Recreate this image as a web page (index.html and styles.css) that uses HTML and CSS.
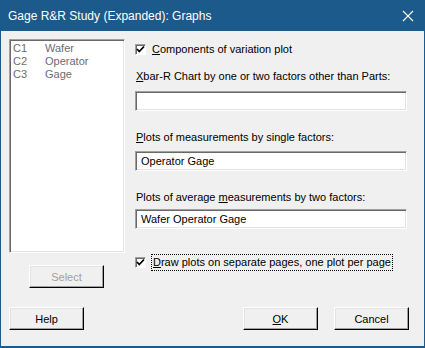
FILE: index.html
```html
<!DOCTYPE html>
<html>
<head>
<meta charset="utf-8">
<link rel="stylesheet" href="styles.css">
</head>
<body>
<div class="window">
  <div class="titlebar">
    <span class="title">Gage R&amp;R Study (Expanded): Graphs</span>
    <svg class="close" width="12" height="12" viewBox="0 0 12 12"><path d="M1 1L11 11M11 1L1 11" stroke="#fff" stroke-width="1.2" fill="none"/></svg>
  </div>
  <div class="content">
    <div class="main">
      <div class="left">
        <div class="listbox">
          <div class="item"><span class="col">C1</span><span>Wafer</span></div>
          <div class="item"><span class="col">C2</span><span>Operator</span></div>
          <div class="item"><span class="col">C3</span><span>Gage</span></div>
        </div>
        <div class="btn disabled select">Select</div>
      </div>
      <div class="right">
        <div class="check first"><span class="box"><svg width="9" height="9" viewBox="0 0 9 9"><path d="M1 4L3.3 6.5L8 1.5" stroke="#000" stroke-width="1.8" fill="none"/></svg></span><span class="lbl"><u>C</u>omponents of variation plot</span></div>
        <div class="label l1"><u>X</u>bar-R Chart by one or two factors other than Parts:</div>
        <div class="input i1"></div>
        <div class="label l2"><u>P</u>lots of measurements by single factors:</div>
        <div class="input i2">Operator Gage</div>
        <div class="label l3">Plots of average <u>m</u>easurements by two factors:</div>
        <div class="input i3">Wafer Operator Gage</div>
        <div class="check last"><span class="box"><svg width="9" height="9" viewBox="0 0 9 9"><path d="M1 4L3.3 6.5L8 1.5" stroke="#000" stroke-width="1.8" fill="none"/></svg></span><span class="lbl focus"><u>D</u>raw plots on separate pages, one plot per page</span></div>
      </div>
    </div>
    <div class="buttons">
      <div class="btn help">Help</div>
      <div class="spacer"></div>
      <div class="btn"><u>O</u>K</div>
      <div class="btn cancel">Cancel</div>
    </div>
  </div>
</div>
</body>
</html>
```
FILE: styles.css
```css
html, body {
  margin: 0;
  padding: 0;
  background: #f0f0f0;
}
body {
  font-family: "Liberation Sans", Arial, sans-serif;
  font-size: 11px;
  color: #000;
  white-space: nowrap;
}
.window {
  width: 425px;
  height: 348px;
  box-sizing: border-box;
  border-left: 1px solid #1b5a8a;
  border-right: 1px solid #1b5a8a;
  border-bottom: 2px solid #1b5a8a;
  background: #f0f0f0;
  display: flex;
  flex-direction: column;
}
.titlebar {
  height: 31px;
  background: #1b5a8a;
  display: flex;
  align-items: center;
  padding-left: 8px;
  padding-right: 11px;
  color: #fff;
  margin: 0 -1px;
}
.title {
  flex: 1;
  font-size: 12px;
}
.close {
  display: block;
}
.content {
  flex: 1;
  display: flex;
  flex-direction: column;
}
.main {
  display: flex;
}
.left {
  margin-left: 8px;
  width: 116px;
  display: flex;
  flex-direction: column;
}
.listbox {
  margin-top: 8px;
  height: 214px;
  box-sizing: border-box;
  background: #fff;
  border: 1px solid;
  border-color: #a0a0a0 #fff #fff #a0a0a0;
  box-shadow: inset 1px 1px 0 #696969, inset -1px -1px 0 #e3e3e3;
  padding: 2px 0 0 3px;
  color: #6d6d6d;
}
.item {
  height: 13px;
  line-height: 13px;
  display: flex;
}
.col {
  width: 32px;
}
.btn {
  width: 75px;
  height: 23px;
  box-sizing: border-box;
  border: 1px solid;
  border-color: #fff #000 #000 #fff;
  box-shadow: inset -1px -1px 0 #a0a0a0, inset 1px 1px 0 #e3e3e3;
  background: #f0f0f0;
  display: flex;
  align-items: center;
  justify-content: center;
}
.disabled {
  color: #a0a0a0;
}
.select {
  margin-top: 12px;
  margin-left: 20px;
}
.right {
  margin-left: 10px;
  width: 272px;
  display: flex;
  flex-direction: column;
}
.check {
  display: flex;
  align-items: center;
  height: 16px;
}
.check.first {
  margin-top: 10px;
}
.check.last {
  margin-top: 25px;
}
.box {
  width: 11px;
  height: 11px;
  box-sizing: border-box;
  background: #fff;
  border: 1px solid;
  border-color: #a0a0a0 #fff #fff #a0a0a0;
  box-shadow: inset 1px 1px 0 #696969;
  display: flex;
  align-items: center;
  justify-content: center;
  margin-right: 6px;
}
.box svg {
  display: block;
}
.lbl.focus {
  outline: 1px dotted #000;
  outline-offset: 0;
  padding: 0 1px;
  line-height: 15px;
}
.label {
  height: 16px;
  line-height: 16px;
  margin-left: 1px;
}
.l1 {
  margin-top: 11px;
}
.l2,
.l3 {
  margin-top: 18px;
}
.input {
  height: 20px;
  box-sizing: border-box;
  background: #fff;
  border: 1px solid;
  border-color: #a0a0a0 #fff #fff #a0a0a0;
  box-shadow: inset 1px 1px 0 #696969, inset -1px -1px 0 #e3e3e3;
  padding-left: 5px;
  line-height: 18px;
}
.i1 {
  margin-top: 7px;
}
.i2 {
  margin-top: 6px;
}
.i3 {
  margin-top: 4px;
}
.buttons {
  display: flex;
  margin-top: 19px;
  padding: 0 15px 0 8px;
}
.spacer {
  flex: 1;
}
.cancel {
  margin-left: 16px;
}
```
